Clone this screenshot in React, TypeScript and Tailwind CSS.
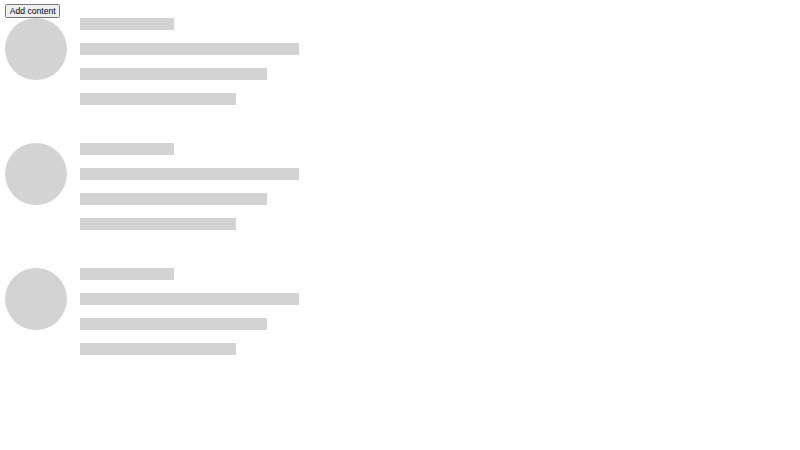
import React from 'react';

const lineWidths = ['w-[94px]', 'w-[219px]', 'w-[187.5px]', 'w-[156px]'];

const SkeletonItem: React.FC = () => (
  <div className="flex gap-[12.5px] h-[125px]">
    <div className="w-[62px] h-[62px] rounded-full bg-[#d3d3d3] shrink-0" />
    <div className="flex flex-col gap-[12.5px]">
      {lineWidths.map((w, i) => (
        <div key={i} className={`h-[12.5px] bg-[#d3d3d3] ${w}`} />
      ))}
    </div>
  </div>
);

export default function App() {
  return (
    <div className="px-[5px] pt-[4px] bg-white min-h-[450px] font-['Liberation_Sans',Arial,sans-serif]">
      <button className="block text-[8.6px] leading-[10.5px] px-[3.75px] py-[0.6px] bg-[#efefef] border border-[#767676] rounded-[1.5px] text-black">
        Add content
      </button>
      <div className="flex flex-col">
        <SkeletonItem />
        <SkeletonItem />
        <SkeletonItem />
      </div>
    </div>
  );
}
